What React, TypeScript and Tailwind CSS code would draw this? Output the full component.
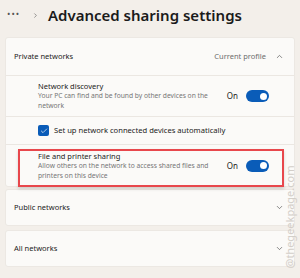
import { ChevronDown, ChevronUp, ChevronRight, Check } from "lucide-react";

function Toggle() {
  return (
    <div className="flex items-center gap-[8px]">
      <span className="text-[8px] text-[#1b1b1b]">On</span>
      <div className="w-[23px] h-[12px] rounded-full bg-[#0a5cb8] flex items-center justify-end pr-[2.5px]">
        <div className="w-[7px] h-[7px] rounded-full bg-white" />
      </div>
    </div>
  );
}

function SettingRow({ title, lines }: { title: string; lines: string[] }) {
  return (
    <div className="flex items-center justify-between pl-[32px] pr-[25px]">
      <div className="flex flex-col">
        <span className="text-[7.5px] leading-[10px] text-[#1b1b1b]">{title}</span>
        {lines.map((l) => (
          <span key={l} className="text-[6.7px] leading-[10px] text-[#767676]">
            {l}
          </span>
        ))}
      </div>
      <Toggle />
    </div>
  );
}

function CollapsedCard({ label }: { label: string }) {
  return (
    <div className="h-[37px] mx-[5px] rounded-[3px] bg-[#fbfaf8] border border-[#ece8e3] flex items-center justify-between pl-[8px] pr-[10px]">
      <span className="text-[7.5px] text-[#1b1b1b]">{label}</span>
      <ChevronDown size={9} strokeWidth={1.5} className="text-[#333]" />
    </div>
  );
}

export default function App() {
  return (
    <div
      className="relative w-[300px] h-[278px] overflow-hidden bg-[#f3efea]"
      style={{ fontFamily: '"Noto Sans", "Open Sans", sans-serif' }}
    >
      {/* breadcrumb header */}
      <div className="h-[30px] flex items-center pl-[7px]">
        <span className="text-[9px] tracking-[1px] text-[#555] w-[22px] leading-none -mt-[3px]">•••</span>
        <ChevronRight size={7} strokeWidth={2} className="text-[#555] ml-[3px]" />
        <h1 className="ml-[9px] text-[15px] font-semibold text-[#1b1b1b] leading-none">
          Advanced sharing settings
        </h1>
      </div>

      {/* private networks card */}
      <div className="mt-[7px] mx-[5px] rounded-[3px] bg-[#fbfaf8] border border-[#ece8e3]">
        <div className="h-[37px] flex items-center justify-between pl-[8px] pr-[10px]">
          <span className="text-[7.5px] text-[#1b1b1b]">Private networks</span>
          <div className="flex items-center gap-[9px]">
            <span className="text-[7.5px] text-[#6d6d6d]">Current profile</span>
            <ChevronUp size={9} strokeWidth={1.5} className="text-[#333]" />
          </div>
        </div>
        <div className="border-t border-[#ebe7e2] h-[41px] flex items-center">
          <div className="w-full">
            <SettingRow
              title="Network discovery"
              lines={["Your PC can find and be found by other devices on the", "network"]}
            />
          </div>
        </div>
        <div className="border-t border-[#ebe7e2] h-[28px] flex items-center pl-[32px] gap-[5px]">
          <div className="w-[11px] h-[11px] rounded-[2px] bg-[#0a5cb8] flex items-center justify-center">
            <Check size={8} strokeWidth={2} className="text-white" />
          </div>
          <span className="text-[7.6px] text-[#1b1b1b]">Set up network connected devices automatically</span>
        </div>
        <div className="border-t border-[#ebe7e2] h-[42px] flex items-center">
          <div className="w-full">
            <SettingRow
              title="File and printer sharing"
              lines={["Allow others on the network to access shared files and", "printers on this device"]}
            />
          </div>
        </div>
      </div>

      <div className="mt-[2px] flex flex-col gap-[4px]">
        <CollapsedCard label="Public networks" />
        <CollapsedCard label="All networks" />
      </div>

      {/* red highlight */}
      <div className="absolute left-[18px] top-[149px] w-[266px] h-[38px] border-2 border-[#e8474c] shadow-[0_2px_3px_rgba(0,0,0,0.15)]" />

      {/* watermark */}
      <div className="absolute left-[290px] top-[217px] -translate-x-1/2 -translate-y-1/2 -rotate-90 whitespace-nowrap text-[11px] text-[#d3cec8]">
        @thegeekpage.com
      </div>
    </div>
  );
}
